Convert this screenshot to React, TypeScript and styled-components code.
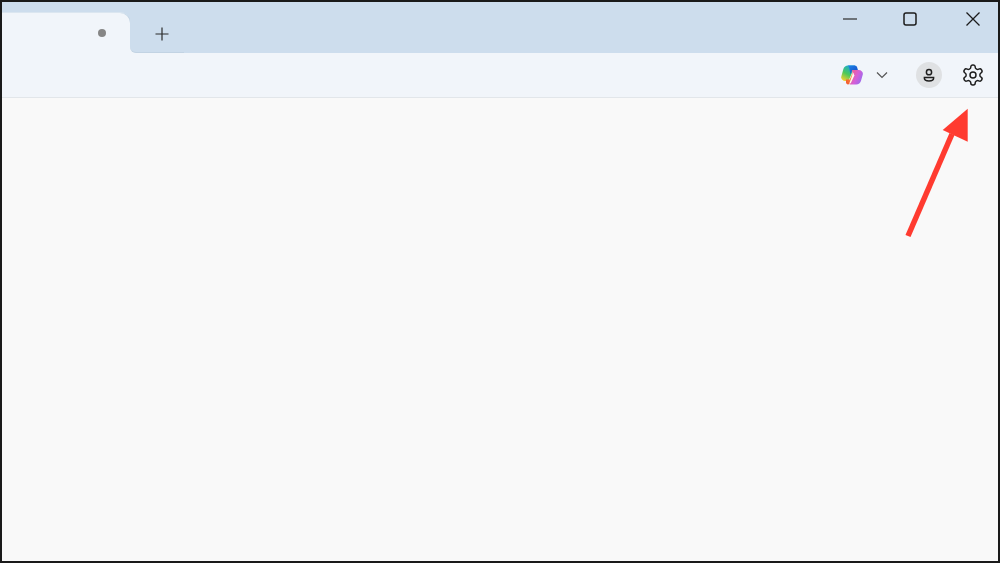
import React from "react";
import styled, { createGlobalStyle } from "styled-components";

const Global = createGlobalStyle`
  html, body { margin: 0; padding: 0; width: 100%; height: 100%; overflow: hidden; background: #000; }
  body { font-family: "Liberation Sans", Arial, sans-serif; }
  #root { width: 100%; height: 100%; }
`;

const Frame = styled.div`
  box-sizing: border-box;
  position: relative;
  width: 1000px;
  height: 563px;
  border: 2px solid #1a1a1a;
  display: flex;
  flex-direction: column;
  background: #f9f9f9;
`;

const TitleBar = styled.header`
  height: 51px;
  flex: none;
  display: flex;
  align-items: stretch;
  background: #cddded;
`;

const Tab = styled.div`
  box-sizing: border-box;
  width: 128px;
  margin-top: 11px;
  padding: 16px 24px 0 0;
  display: flex;
  justify-content: flex-end;
  align-items: flex-start;
  background: #f1f5fa;
  border-top-right-radius: 10px;
  box-shadow: 1px 0 0 #c3d5e5, 0 -1px 0 #dbe6f0;
`;

const TabDot = styled.span`
  width: 8px;
  height: 8px;
  border-radius: 50%;
  background: #868686;
`;

const NewTabSlot = styled.div`
  width: 54px;
  background: linear-gradient(to bottom, #cddded 0 40px, #f1f5fa 40px);
`;

const NewTabWell = styled.div`
  box-sizing: border-box;
  height: 100%;
  padding-top: 25px;
  padding-left: 25px;
  background: #cddded;
  border-bottom: 1px solid #c2d3e3;
  border-bottom-left-radius: 6px;
  color: #2b2b2b;
  line-height: 0;
`;

const Spacer = styled.div`
  flex: 1;
`;

const WindowControls = styled.div`
  display: flex;
  align-items: flex-start;
  gap: 46px;
  padding: 10px 18px 0 0;
  color: #1c1c1c;
  line-height: 0;
`;

const CloseSlot = styled.span`
  margin-left: 3px;
`;

const Toolbar = styled.div`
  box-sizing: border-box;
  height: 45px;
  flex: none;
  display: flex;
  align-items: center;
  justify-content: flex-end;
  padding: 0 13px 0 0;
  background: #f1f5fa;
  border-bottom: 1px solid #e2e6ea;
`;

const CopilotGroup = styled.div`
  display: flex;
  align-items: center;
  gap: 13px;
  margin-right: 28px;
  line-height: 0;
`;

const Avatar = styled.div`
  width: 26px;
  height: 26px;
  border-radius: 50%;
  background: #dfe1e3;
  display: flex;
  align-items: center;
  justify-content: center;
  margin-right: 19px;
  line-height: 0;
`;

const Content = styled.main`
  flex: 1;
  background: #f9f9f9;
`;

const Callout = styled.svg`
  position: absolute;
  left: 902px;
  top: 102px;
`;

const PlusIcon = () => (
  <svg width="14" height="14" viewBox="0 0 14 14" fill="none" stroke="currentColor" strokeWidth="1.2">
    <path d="M0.5 7H13.5M7 0.5V13.5" />
  </svg>
);

const MinIcon = () => (
  <svg width="14" height="14" viewBox="0 0 14 14" fill="none" stroke="#3a3a3a" strokeWidth="1.3">
    <path d="M0 7H14" />
  </svg>
);

const MaxIcon = () => (
  <svg width="14" height="14" viewBox="0 0 14 14" fill="none" stroke="currentColor" strokeWidth="1.5">
    <rect x="1" y="1" width="12" height="12" rx="2" />
  </svg>
);

const CloseIcon = () => (
  <svg width="14" height="14" viewBox="0 0 14 14" fill="none" stroke="currentColor" strokeWidth="1.3">
    <path d="M0.5 0.5L13.5 13.5M13.5 0.5L0.5 13.5" />
  </svg>
);

const CopilotIcon = () => (
  <svg width="22" height="20" viewBox="0 0 22 20">
    <defs>
      <linearGradient id="cpA" x1="0.2" y1="1" x2="0.7" y2="0">
        <stop offset="0" stopColor="#f9d02e" />
        <stop offset="0.45" stopColor="#4cc85a" />
        <stop offset="1" stopColor="#18a8dc" />
      </linearGradient>
      <linearGradient id="cpB" x1="0" y1="0.3" x2="1" y2="0.8">
        <stop offset="0" stopColor="#f5608a" />
        <stop offset="0.5" stopColor="#d45fd8" />
        <stop offset="1" stopColor="#8f6cf2" />
      </linearGradient>
      <linearGradient id="cpC" x1="0" y1="0" x2="1" y2="1">
        <stop offset="0" stopColor="#1c86ea" />
        <stop offset="1" stopColor="#1846c2" />
      </linearGradient>
      <linearGradient id="cpD" x1="0" y1="1" x2="1" y2="0">
        <stop offset="0" stopColor="#f2552f" />
        <stop offset="1" stopColor="#fb9f3e" />
      </linearGradient>
    </defs>
    <path d="M7 0.5H14L10.5 9 7.5 16H4C1.6 16 -0.2 13.8 0.3 11.5L2.4 4C3 1.9 4.8 0.5 7 0.5Z" fill="url(#cpA)" />
    <path d="M6.5 0.5H13.8C15 0.5 15.9 1.4 16.2 2.5L16.9 5H12.6C11.6 5 10.9 5.6 10.6 6.5L9.4 9.6 8.4 3.4C8.2 2 7.6 1 6.5 0.5Z" fill="url(#cpC)" />
    <path d="M11 5H17.8C20.4 5 22.3 7.2 21.8 9.6L20 15.8C19.4 17.9 17.6 19.5 15.2 19.5H8.6L12 11Z" fill="url(#cpB)" />
    <path d="M5 14.5H8.8L11.4 8 12.2 13 9.6 17.8C9 19 8 19.5 7 19.5 5.9 19.5 5.1 18.7 5 17.6Z" fill="url(#cpD)" />
    <path d="M12.3 7.5L8.2 18.8C9 18.8 9.7 18.4 10.1 17.6L13.4 10.4Z" fill="#fff" opacity="0.92" />
  </svg>
);

const ChevronIcon = () => (
  <svg width="12" height="8" viewBox="0 0 12 8" fill="none" stroke="#555" strokeWidth="1.2">
    <path d="M1 1.5L6 6.5L11 1.5" />
  </svg>
);

const PersonIcon = () => (
  <svg width="14" height="14" viewBox="0 0 14 14" fill="none" stroke="#1f1f1f" strokeWidth="1.5">
    <circle cx="7" cy="4.2" r="2.6" />
    <path d="M2.4 9.4H11.6V10.2C11.6 12 9.6 12.9 7 12.9 4.4 12.9 2.4 12 2.4 10.2Z" />
  </svg>
);

const GearIcon = () => (
  <svg width="24" height="24" viewBox="0 0 24 24" fill="none" stroke="#1c1c1c" strokeWidth="1.45" strokeLinejoin="round">
    <path d="M12.22 2h-.44a2 2 0 0 0-2 2v.18a2 2 0 0 1-1 1.73l-.43.25a2 2 0 0 1-2 0l-.15-.08a2 2 0 0 0-2.73.73l-.22.38a2 2 0 0 0 .73 2.73l.15.1a2 2 0 0 1 1 1.72v.51a2 2 0 0 1-1 1.74l-.15.09a2 2 0 0 0-.73 2.73l.22.38a2 2 0 0 0 2.73.73l.15-.08a2 2 0 0 1 2 0l.43.25a2 2 0 0 1 1 1.73V20a2 2 0 0 0 2 2h.44a2 2 0 0 0 2-2v-.18a2 2 0 0 1 1-1.73l.43-.25a2 2 0 0 1 2 0l.15.08a2 2 0 0 0 2.73-.73l.22-.39a2 2 0 0 0-.73-2.73l-.15-.08a2 2 0 0 1-1-1.74v-.5a2 2 0 0 1 1-1.74l.15-.09a2 2 0 0 0 .73-2.73l-.22-.38a2 2 0 0 0-2.73-.73l-.15.08a2 2 0 0 1-2 0l-.43-.25a2 2 0 0 1-1-1.73V4a2 2 0 0 0-2-2z" />
    <circle cx="12" cy="12" r="3" />
  </svg>
);

export default function App() {
  return (
    <>
      <Global />
      <Frame>
        <TitleBar>
          <Tab>
            <TabDot />
          </Tab>
          <NewTabSlot>
            <NewTabWell>
              <PlusIcon />
            </NewTabWell>
          </NewTabSlot>
          <Spacer />
          <WindowControls>
            <MinIcon />
            <MaxIcon />
            <CloseSlot>
              <CloseIcon />
            </CloseSlot>
          </WindowControls>
        </TitleBar>
        <Toolbar>
          <CopilotGroup>
            <CopilotIcon />
            <ChevronIcon />
          </CopilotGroup>
          <Avatar>
            <PersonIcon />
          </Avatar>
          <GearIcon />
        </Toolbar>
        <Content />
        <Callout width="70" height="140" viewBox="0 0 70 140">
          <path d="M4 132L48 30" stroke="#ff3b30" strokeWidth="5.5" fill="none" />
          <path d="M63.7 4.7V37.7L38.7 26Z" fill="#ff3b30" />
        </Callout>
      </Frame>
    </>
  );
}
